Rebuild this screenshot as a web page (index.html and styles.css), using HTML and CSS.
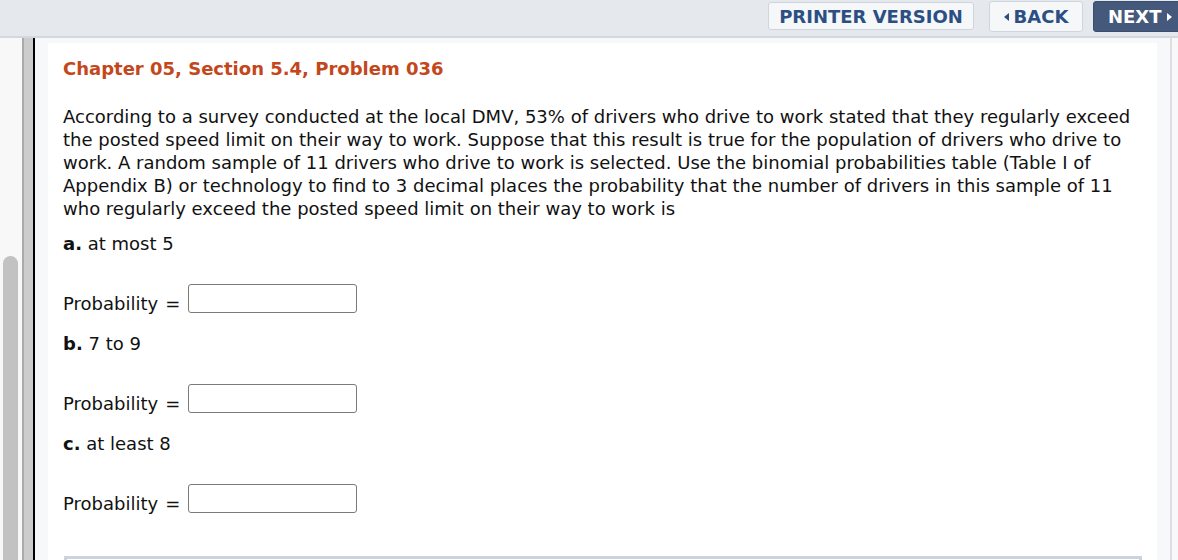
FILE: index.html
```html
<!DOCTYPE html>
<html>
<head>
<meta charset="utf-8">
<link rel="stylesheet" href="styles.css">
</head>
<body>
<div class="topbar">
  <button class="btn btn-light printer">PRINTER VERSION</button>
  <button class="btn btn-light back"><span class="tri tri-left"></span>BACK</button>
  <button class="btn btn-dark next">NEXT<span class="tri tri-right"></span></button>
</div>
<div class="frame">
  <div class="track"><div class="thumb"></div></div>
  <div class="divider"></div>
  <div class="main">
    <div class="panel">
      <h1 class="title">Chapter 05, Section 5.4, Problem 036</h1>
      <p class="question">According to a survey conducted at the local DMV, 53% of drivers who drive to work stated that they regularly exceed the posted speed limit on their way to work. Suppose that this result is true for the population of drivers who drive to work. A random sample of 11 drivers who drive to work is selected. Use the binomial probabilities table (Table I of Appendix B) or technology to find to 3 decimal places the probability that the number of drivers in this sample of 11 who regularly exceed the posted speed limit on their way to work is</p>
      <p class="part first"><b>a.</b> at most 5</p>
      <div class="answer"><span>Probability</span><span class="eq">=</span><span class="input"></span></div>
      <p class="part"><b>b.</b> 7 to 9</p>
      <div class="answer"><span>Probability</span><span class="eq">=</span><span class="input"></span></div>
      <p class="part"><b>c.</b> at least 8</p>
      <div class="answer"><span>Probability</span><span class="eq">=</span><span class="input"></span></div>
      <div class="footbox"></div>
    </div>
  </div>
  <div class="rdivider"></div>
</div>
</body>
</html>
```
FILE: styles.css
```css
html, body {
  margin: 0;
  padding: 0;
  background: #f8f8f8;
  font-family: "DejaVu Sans", Verdana, sans-serif;
  color: #111;
  overflow: hidden;
}
.topbar {
  height: 35px;
  background: #e5e8ed;
  border-bottom: 2px solid #d3d8e0;
  display: flex;
  justify-content: flex-end;
  align-items: flex-start;
  padding-top: 1px;
  box-sizing: content-box;
}
.btn {
  font-family: "DejaVu Sans", Verdana, sans-serif;
  font-weight: bold;
  font-size: 18px;
  height: 29px;
  border-radius: 3px;
  display: flex;
  align-items: center;
  justify-content: center;
  padding: 0;
  margin: 0;
}
.btn-light {
  background: #f6f7f9;
  border: 1px solid #cfd5de;
  color: #2b4f83;
}
.printer {
  width: 206px;
  margin-top: 1px;
  height: 28px;
}
.back {
  width: 94px;
  margin-left: 15px;
  height: 31px;
}
.btn-dark {
  background: #44597b;
  border: 1px solid #3a4e6d;
  color: #fff;
}
.next {
  width: 90px;
  margin-left: 10px;
  margin-right: -5px;
  height: 31px;
  justify-content: flex-start;
  padding-left: 14px;
}
.tri {
  display: inline-block;
  width: 0;
  height: 0;
  border-top: 4px solid transparent;
  border-bottom: 4px solid transparent;
}
.tri-left {
  border-right: 5px solid #2b4f83;
  margin-right: 5px;
}
.tri-right {
  border-left: 5px solid #fff;
  margin-left: 5px;
}
.frame {
  display: flex;
  height: 523px;
}
.track {
  width: 22px;
  background: #f8f8f8;
  position: relative;
}
.thumb {
  position: absolute;
  left: 3px;
  top: 218px;
  width: 15px;
  height: 320px;
  border-radius: 8px;
  background: #c2c2c2;
}
.divider {
  width: 9px;
  border-left: 2px solid #aaaaaa;
  background: #cccccc;
  border-right: 2px solid #000;
}
.main {
  flex: 1;
  background: #f7f8fa;
  padding: 5px 13px 0 13px;
}
.rdivider {
  width: 6px;
  border-left: 2px solid #dcdee2;
  background: #f8f8f8;
}
.panel {
  background: #fff;
  height: 100%;
  padding: 15px 15px 0 15px;
  box-sizing: border-box;
}
.title {
  margin: 0;
  font-size: 18px;
  font-weight: bold;
  color: #c4471c;
  line-height: 22px;
}
.question {
  margin: 25px 0 0 0;
  font-size: 18px;
  line-height: 23px;
}
.part {
  margin: 17px 0 0 0;
  font-size: 18px;
  line-height: 23px;
}
.part.first {
  margin-top: 12px;
}
.part b {
  font-weight: bold;
}
.answer {
  display: flex;
  align-items: flex-end;
  margin-top: 29px;
  font-size: 18px;
  line-height: 23px;
}
.eq {
  margin-left: 7px;
  margin-right: 8px;
}
.input {
  display: inline-block;
  width: 167px;
  height: 27px;
  border: 1px solid #7a7a7a;
  border-radius: 3px;
  background: #fff;
  margin-bottom: 2px;
}
.footbox {
  margin-top: 41px;
  margin-left: 1px;
  height: 20px;
  border: 3px solid #cdd3de;
  border-bottom: none;
}
```
